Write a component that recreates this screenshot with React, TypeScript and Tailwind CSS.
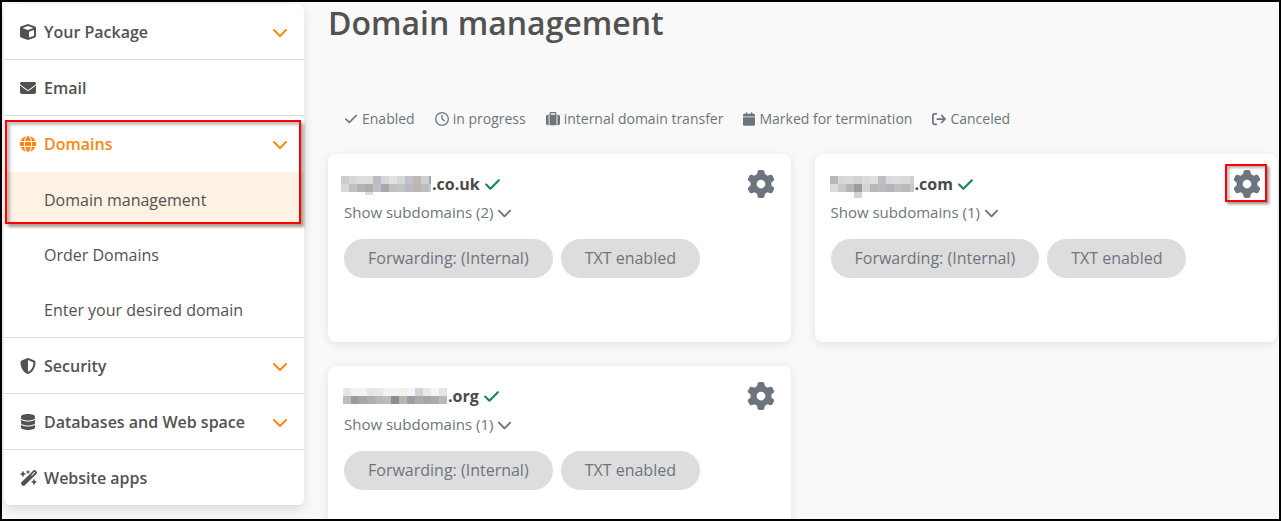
import type { ReactNode } from 'react';
import {
  FaArrowRightFromBracket,
  FaCalendar,
  FaCheck,
  FaChevronDown,
  FaCube,
  FaDatabase,
  FaEnvelope,
  FaGear,
  FaGlobe,
  FaRegClock,
  FaShieldHalved,
  FaSuitcase,
  FaWandMagicSparkles,
} from 'react-icons/fa6';

interface NavItem {
  label: string;
  icon: ReactNode;
  expandable?: boolean;
  active?: boolean;
  children?: string[];
}

interface Domain {
  suffix: string;
  subdomains: number;
  mask: string[][];
  maskWidth: number;
  tail?: { col: number; color: string; height: number };
  indent: string;
  highlight?: boolean;
}

const NAV: NavItem[] = [
  { label: 'Your Package', icon: <FaCube size={16} />, expandable: true },
  { label: 'Email', icon: <FaEnvelope size={16} /> },
  {
    label: 'Domains',
    icon: <FaGlobe size={16} />,
    expandable: true,
    active: true,
    children: ['Domain management', 'Order Domains', 'Enter your desired domain'],
  },
  { label: 'Security', icon: <FaShieldHalved size={16} />, expandable: true },
  { label: 'Databases and Web space', icon: <FaDatabase size={16} />, expandable: true },
  { label: 'Website apps', icon: <FaWandMagicSparkles size={18} className="shrink-0" /> },
];

const LEGEND = [
  { label: 'Enabled', icon: <FaCheck size={14} /> },
  { label: 'in progress', icon: <FaRegClock size={14} /> },
  { label: 'internal domain transfer', icon: <FaSuitcase size={14} /> },
  { label: 'Marked for termination', icon: <FaCalendar size={14} className="w-3" /> },
  { label: 'Canceled', icon: <FaArrowRightFromBracket size={14} /> },
];

const DOMAINS: Domain[] = [
  {
    suffix: '.co.uk',
    subdomains: 2,
    maskWidth: 90,
    indent: '-ml-[3px]',
    mask: [
      ['#cecbc8', '#d5d8d6', '#dadcdf', '#dddddb', '#bcbdc3', '#d6d6d8', '#e5e1df', '#d3d8d9', '#c2c3c9', '#bdb8b3', '#d0d0d0', '#99a8b8'],
      ['#d8d8d8', '#c3bfbb', '#b1b3b9', '#b1aeaa', '#bdbfc5', '#aaa8aa', '#bfc1c5', '#c4c4c2', '#b8bac0', '#bab5b0', '#bcbdc1', '#c3cbd6'],
    ],
    tail: { col: 3, color: '#dcdcdc', height: 3 },
  },
  {
    suffix: '.com',
    subdomains: 1,
    maskWidth: 84,
    indent: '-ml-px',
    highlight: true,
    mask: [
      ['#b8b8b8', '#d8d6d8', '#dad8d8', '#d3d1d0', '#dadbdd', '#e1dfdd', '#bfbfc1', '#dadada', '#dcdcdc', '#dadada', '#cfcfcf'],
      ['#dadad6', '#cbc9cb', '#b4b6bb', '#9c9c9e', '#d3d5d8', '#bcb6b2', '#b7bbc2', '#b5b5b7', '#bfbfc1', '#bcb8b6', '#bccad6'],
    ],
    tail: { col: 3, color: '#d3d3d6', height: 6 },
  },
  {
    suffix: '.org',
    subdomains: 1,
    maskWidth: 104,
    indent: '-ml-px',
    mask: [
      ['#e6e6e6', '#f2f2f2', '#f2f2f2', '#e5e7e7', '#e8e8ea', '#f2f2f2', '#f2f2f2', '#f1f1f0', '#f4f5f6', '#d5d4d2', '#e8e9ea', '#f5f5f5', '#e4e4e4'],
      ['#bcbcbe', '#a09a96', '#a3a6aa', '#adafb6', '#b8b8ba', '#bebcba', '#8e8e92', '#bab5ae', '#9b9ea3', '#a8abb4', '#a8a49f', '#a8acb5', '#bab8b8'],
    ],
  },
];

function Sidebar() {
  return (
    <nav className="w-[300px] shrink-0 self-start overflow-hidden rounded-lg bg-white shadow-[0_4px_12px_rgba(0,0,0,0.12)]">
      <ul className="divide-y divide-[#dcdcdc] border-b border-[#dcdcdc]">
        {NAV.map((item) => (
          <li key={item.label}>
            <button
              className={`flex h-[55px] w-full items-center gap-2 pr-4 pl-4 text-left font-semibold ${
                item.active ? 'text-[#ff8610]' : 'text-[#525252]'
              }`}
            >
              <span className="flex w-4">{item.icon}</span>
              <span className="grow">{item.label}</span>
              {item.expandable && <FaChevronDown size={16} className="text-[#ff8610]" />}
            </button>
            {item.children && (
              <div className="pt-px">
                {item.children.map((child, i) => (
                  <a
                    key={child}
                    href="#"
                    className={`flex h-[55px] items-center pl-10 text-[#525252] ${i === 0 ? 'bg-[#fff1e4]' : ''}`}
                  >
                    {child}
                  </a>
                ))}
              </div>
            )}
          </li>
        ))}
      </ul>
    </nav>
  );
}

// Pixelated block that hides the name in front of the suffix
function Mask({ domain }: { domain: Domain }) {
  const { mask, maskWidth, tail, indent } = domain;
  return (
    <svg
      viewBox={`0 0 ${maskWidth} 22`}
      width={maskWidth}
      height={22}
      className={`mt-1.5 shrink-0 ${indent}`}
      shapeRendering="crispEdges"
      aria-hidden="true"
    >
      {mask.map((row, y) =>
        row.map((color, x) => <rect key={`${x}-${y}`} x={x * 8} y={y * 8} width={8} height={8} fill={color} />)
      )}
      {tail && <rect x={tail.col * 8} y={16} width={8} height={tail.height} fill={tail.color} />}
    </svg>
  );
}

function DomainCard({ domain }: { domain: Domain }) {
  return (
    <article className="flex h-[188px] flex-col items-start rounded-lg bg-white px-4 pt-4 shadow-[0_2px_10px_rgba(0,0,0,0.1)]">
      <header className="flex h-7 w-full items-center">
        <Mask domain={domain} />
        <h2 className="ml-px font-bold text-[#4a4a4a]">{domain.suffix}</h2>
        <FaCheck size={17} className="ml-1 text-[#198754]" />
        <div className="relative ml-auto flex">
          <button aria-label="Domain settings" className="text-[#6c757d]">
            <FaGear size={28} />
          </button>
          {domain.highlight && (
            <div className="pointer-events-none absolute -top-1.5 -right-1.5 -bottom-1 -left-2 border-2 border-[#ff0000] shadow-[2px_2px_3px_rgba(0,0,0,0.45),inset_2px_2px_3px_rgba(0,0,0,0.3)]" />
          )}
        </div>
      </header>
      <button className="mt-1 flex items-center gap-1 text-[15px] leading-5 text-[#6c757d]">
        Show subdomains ({domain.subdomains})
        <FaChevronDown size={15} />
      </button>
      <div className="mt-[17px] flex gap-2 text-[#6c757d]">
        <span className="rounded-full bg-[#ddd] px-6 py-2 leading-[23px]">Forwarding: (Internal)</span>
        <span className="rounded-full bg-[#ddd] px-6 py-2 leading-[23px]">TXT enabled</span>
      </div>
    </article>
  );
}

export default function App() {
  return (
    <div className="flex h-screen overflow-hidden border-2 border-black bg-[#f9f9f9] pt-0.5 pl-0.5 font-['Open_Sans',sans-serif] text-base">
      <div className="relative shrink-0">
        <Sidebar />
        {/* Marker around the active menu entry */}
        <div className="pointer-events-none absolute top-[116px] left-px h-[104px] w-[296px] border-2 border-[#ff0000] shadow-[3px_3px_3px_rgba(0,0,0,0.35),inset_3px_3px_3px_rgba(0,0,0,0.25)]" />
      </div>
      <main className="min-w-0 grow pr-0.5 pl-6">
        <h1 className="text-[32px] leading-[38px] font-semibold text-[#525252]">Domain management</h1>
        <ul className="mt-[66px] flex gap-5 pl-4 text-sm leading-[22px] text-[#6c757d]">
          {LEGEND.map((entry) => (
            <li key={entry.label} className="flex items-center gap-1">
              {entry.icon}
              {entry.label}
            </li>
          ))}
        </ul>
        <section className="mt-6 grid grid-cols-2 gap-6">
          {DOMAINS.map((domain) => (
            <DomainCard key={domain.suffix} domain={domain} />
          ))}
        </section>
      </main>
    </div>
  );
}
